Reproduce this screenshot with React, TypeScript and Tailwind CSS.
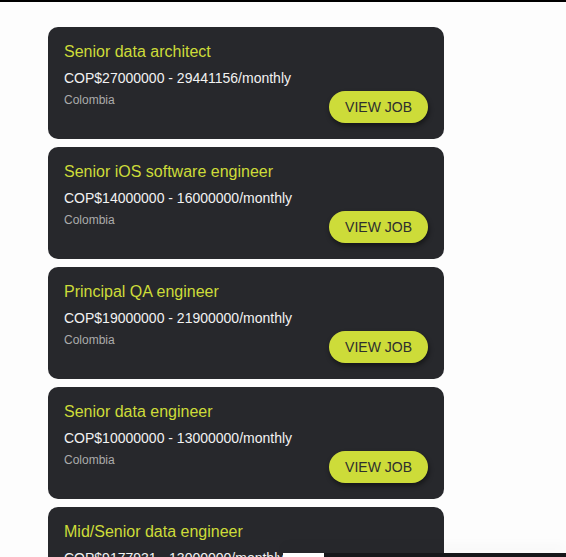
import React from "react"

type Job = {
  title: string
  salary: string
  country: string
}

const jobs: Job[] = [
  { title: "Senior data architect", salary: "COP$27000000 - 29441156/monthly", country: "Colombia" },
  { title: "Senior iOS software engineer", salary: "COP$14000000 - 16000000/monthly", country: "Colombia" },
  { title: "Principal QA engineer", salary: "COP$19000000 - 21900000/monthly", country: "Colombia" },
  { title: "Senior data engineer", salary: "COP$10000000 - 13000000/monthly", country: "Colombia" },
  { title: "Mid/Senior data engineer", salary: "COP$9177931 - 13000000/monthly", country: "Colombia" },
]

function JobCard({ job }: { job: Job }) {
  return (
    <div className="w-[396px] rounded-[10px] bg-[#27282c] p-4">
      <h3 className="text-base leading-[18px] text-[#cddc39]">{job.title}</h3>
      <p className="mt-[7px] text-sm leading-5 text-[#f2f2f2]">{job.salary}</p>
      <div className="mt-[3px] flex items-start justify-between">
        <span className="pt-[1px] text-xs leading-4 text-[#ababab]">{job.country}</span>
        <button className="h-8 rounded-full bg-[#cddc39] px-4 text-sm text-[#2e2e2e] shadow-[1px_3px_5px_rgba(0,0,0,0.45)]">
          VIEW JOB
        </button>
      </div>
    </div>
  )
}

export default function App() {
  return (
    <div className="min-h-screen bg-[#fdfdfd] font-['Liberation_Sans',Arial,sans-serif]">
      {/* top strip */}
      <div className="h-[2px] bg-black" />

      {/* job list */}
      <div className="flex flex-col gap-2 pl-12 pt-[25px] pb-10">
        {jobs.map((job) => (
          <JobCard key={job.title} job={job} />
        ))}
      </div>

      {/* bottom bar peeking in */}
      <div className="fixed bottom-0 left-[283px] right-0 flex h-[4px] shadow-[0_-6px_12px_rgba(0,0,0,0.06)]">
        <div className="w-[41px] bg-white" />
        <div className="flex-1 bg-[#16171a]" />
      </div>
    </div>
  )
}
